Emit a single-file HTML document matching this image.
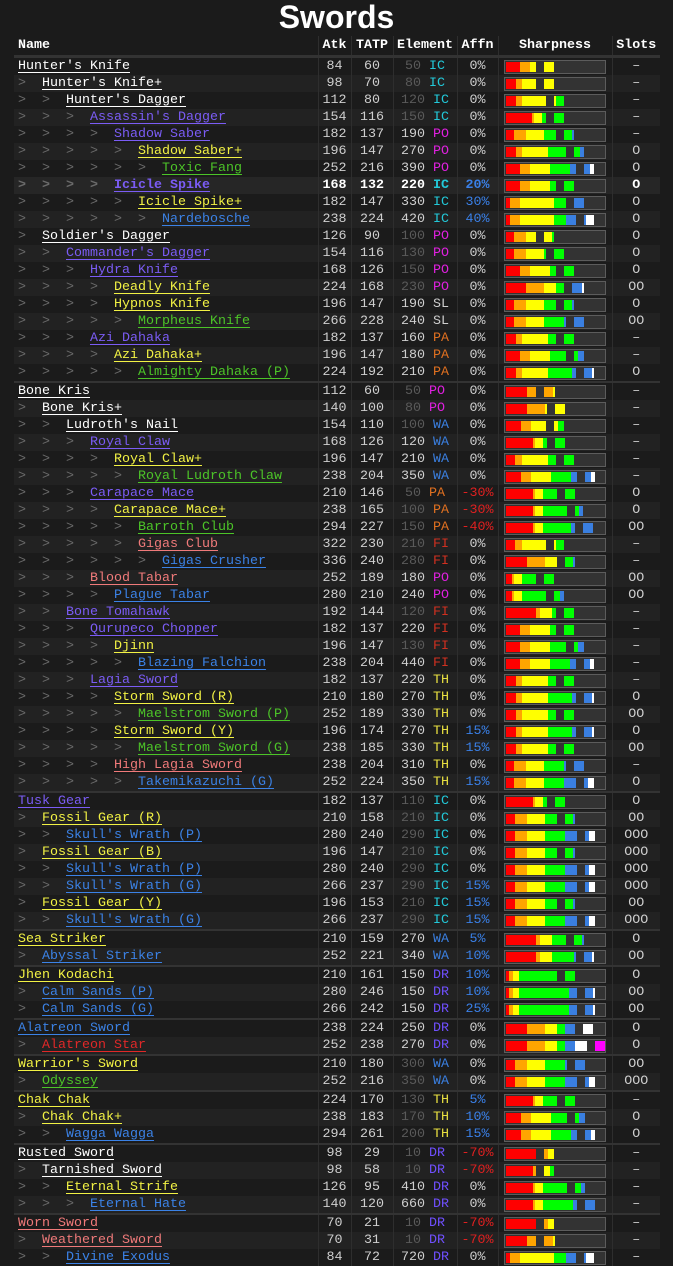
<!DOCTYPE html>
<html><head><meta charset="utf-8">
<style>
html,body{margin:0;padding:0;background:#1b1b1b;width:673px;height:1266px;overflow:hidden}
h1{position:absolute;top:0;left:0;width:673px;margin:0;text-align:center;font:bold 32px/35px "Liberation Sans",sans-serif;color:#fff}
table{position:absolute;left:14px;top:36px;width:646px;border-collapse:collapse;table-layout:fixed;font:13.33px/17px "Liberation Mono",monospace;color:#cfcfcf}
th{height:19px;padding:0;color:#fff;font-weight:bold;text-align:center;border-bottom:3px solid #333;border-left:1px solid #2e2e2e}
th:first-child{text-align:left;padding-left:4px;border-left:none}
td{height:17px;padding:0;text-align:center;border-left:1px solid #2e2e2e;white-space:pre;overflow:hidden}
td:first-child{text-align:left;padding-left:4px;border-left:none}
tbody tr:nth-child(even){background:#222}
tbody+tbody tr:first-child td{border-top:2px solid #333}
tr.hl{background:#262626!important;font-weight:bold;color:#fff}
.a{color:#6a6a6a}
u{text-underline-offset:3px}
.W{color:#fff}.P{color:#7b5cf5}.Y{color:#f2f244}.G{color:#4cc428}.B{color:#3b82e6}.S{color:#f07a7a}.R{color:#e02828}
.gr{color:#5a5a5a}
.IC{color:#22c8d8}.PO{color:#e020e0}.SL{color:#cfcfcf}.PA{color:#e07020}.WA{color:#3a7fe0}.FI{color:#d03020}.TH{color:#e8e040}.DR{color:#7050ff}
.pos{color:#3a80e8}.neg{color:#e02020}
.sb{display:flex;width:98px;height:10px;padding:1px;border:1px solid #5c5c5c;background:#333;margin-left:5px;margin-top:1px}
.sb i{display:block;flex:none;height:10px}
i.r{background:#f00}i.o{background:#ffa500}i.y{background:#ff0}i.g{background:#0f0}i.b{background:#3a7fe0}i.w{background:#fff}i.p{background:#f0f}i.k{background:transparent}
</style></head><body>
<h1>Swords</h1>
<table>
<colgroup><col style="width:304px"><col style="width:33px"><col style="width:42px"><col style="width:64px"><col style="width:41px"><col style="width:114px"><col style="width:48px"></colgroup>
<thead><tr><th>Name</th><th>Atk</th><th>TATP</th><th>Element</th><th>Affn</th><th>Sharpness</th><th>Slots</th></tr></thead>
<tbody>
<tr><td><u class="W">Hunter's Knife</u></td><td>84</td><td>60</td><td><span class="gr">50</span> <span class="IC">IC</span></td><td>0%</td><td><div class="sb"><i class="r" style="width:14px"></i><i class="o" style="width:10px"></i><i class="y" style="width:6px"></i><i class="k" style="width:8px"></i><i class="y" style="width:10px"></i></div></td><td>–</td></tr>
<tr><td><span class="a">&gt;  </span><u class="W">Hunter's Knife+</u></td><td>98</td><td>70</td><td><span class="gr">80</span> <span class="IC">IC</span></td><td>0%</td><td><div class="sb"><i class="r" style="width:10px"></i><i class="o" style="width:6px"></i><i class="y" style="width:14px"></i><i class="k" style="width:8px"></i><i class="y" style="width:10px"></i></div></td><td>–</td></tr>
<tr><td><span class="a">&gt;  &gt;  </span><u class="W">Hunter's Dagger</u></td><td>112</td><td>80</td><td><span class="gr">120</span> <span class="IC">IC</span></td><td>0%</td><td><div class="sb"><i class="r" style="width:10px"></i><i class="o" style="width:6px"></i><i class="y" style="width:24px"></i><i class="k" style="width:8px"></i><i class="y" style="width:2px"></i><i class="g" style="width:8px"></i></div></td><td>–</td></tr>
<tr><td><span class="a">&gt;  &gt;  &gt;  </span><u class="P">Assassin's Dagger</u></td><td>154</td><td>116</td><td><span class="gr">150</span> <span class="IC">IC</span></td><td>0%</td><td><div class="sb"><i class="r" style="width:26px"></i><i class="o" style="width:2px"></i><i class="y" style="width:8px"></i><i class="g" style="width:4px"></i><i class="k" style="width:8px"></i><i class="g" style="width:10px"></i></div></td><td>–</td></tr>
<tr><td><span class="a">&gt;  &gt;  &gt;  &gt;  </span><u class="P">Shadow Saber</u></td><td>182</td><td>137</td><td>190 <span class="PO">PO</span></td><td>0%</td><td><div class="sb"><i class="r" style="width:8px"></i><i class="o" style="width:12px"></i><i class="y" style="width:18px"></i><i class="g" style="width:12px"></i><i class="k" style="width:8px"></i><i class="g" style="width:8px"></i><i class="b" style="width:2px"></i></div></td><td>–</td></tr>
<tr><td><span class="a">&gt;  &gt;  &gt;  &gt;  &gt;  </span><u class="Y">Shadow Saber+</u></td><td>196</td><td>147</td><td>270 <span class="PO">PO</span></td><td>0%</td><td><div class="sb"><i class="r" style="width:10px"></i><i class="o" style="width:6px"></i><i class="y" style="width:26px"></i><i class="g" style="width:18px"></i><i class="k" style="width:8px"></i><i class="g" style="width:6px"></i><i class="b" style="width:4px"></i></div></td><td>O</td></tr>
<tr><td><span class="a">&gt;  &gt;  &gt;  &gt;  &gt;  &gt;  </span><u class="G">Toxic Fang</u></td><td>252</td><td>216</td><td>390 <span class="PO">PO</span></td><td>0%</td><td><div class="sb"><i class="r" style="width:14px"></i><i class="o" style="width:10px"></i><i class="y" style="width:20px"></i><i class="g" style="width:20px"></i><i class="b" style="width:6px"></i><i class="k" style="width:8px"></i><i class="b" style="width:6px"></i><i class="w" style="width:4px"></i></div></td><td>O</td></tr>
<tr class="hl"><td><span class="a">&gt;  &gt;  &gt;  &gt;  </span><u class="P">Icicle Spike</u></td><td>168</td><td>132</td><td>220 <span class="IC">IC</span></td><td><span class="pos">20%</span></td><td><div class="sb"><i class="r" style="width:14px"></i><i class="o" style="width:10px"></i><i class="y" style="width:20px"></i><i class="g" style="width:6px"></i><i class="k" style="width:8px"></i><i class="g" style="width:10px"></i></div></td><td>O</td></tr>
<tr><td><span class="a">&gt;  &gt;  &gt;  &gt;  &gt;  </span><u class="Y">Icicle Spike+</u></td><td>182</td><td>147</td><td>330 <span class="IC">IC</span></td><td><span class="pos">30%</span></td><td><div class="sb"><i class="r" style="width:4px"></i><i class="o" style="width:10px"></i><i class="y" style="width:34px"></i><i class="g" style="width:12px"></i><i class="k" style="width:8px"></i><i class="b" style="width:10px"></i></div></td><td>O</td></tr>
<tr><td><span class="a">&gt;  &gt;  &gt;  &gt;  &gt;  &gt;  </span><u class="B">Nardebosche</u></td><td>238</td><td>224</td><td>420 <span class="IC">IC</span></td><td><span class="pos">40%</span></td><td><div class="sb"><i class="r" style="width:4px"></i><i class="o" style="width:10px"></i><i class="y" style="width:34px"></i><i class="g" style="width:12px"></i><i class="b" style="width:10px"></i><i class="k" style="width:8px"></i><i class="b" style="width:2px"></i><i class="w" style="width:8px"></i></div></td><td>O</td></tr>
<tr><td><span class="a">&gt;  </span><u class="W">Soldier's Dagger</u></td><td>126</td><td>90</td><td><span class="gr">100</span> <span class="PO">PO</span></td><td>0%</td><td><div class="sb"><i class="r" style="width:8px"></i><i class="o" style="width:12px"></i><i class="y" style="width:10px"></i><i class="k" style="width:8px"></i><i class="y" style="width:8px"></i><i class="g" style="width:2px"></i></div></td><td>O</td></tr>
<tr><td><span class="a">&gt;  &gt;  </span><u class="P">Commander's Dagger</u></td><td>154</td><td>116</td><td><span class="gr">130</span> <span class="PO">PO</span></td><td>0%</td><td><div class="sb"><i class="r" style="width:8px"></i><i class="o" style="width:12px"></i><i class="y" style="width:18px"></i><i class="g" style="width:2px"></i><i class="k" style="width:8px"></i><i class="g" style="width:10px"></i></div></td><td>O</td></tr>
<tr><td><span class="a">&gt;  &gt;  &gt;  </span><u class="P">Hydra Knife</u></td><td>168</td><td>126</td><td><span class="gr">150</span> <span class="PO">PO</span></td><td>0%</td><td><div class="sb"><i class="r" style="width:14px"></i><i class="o" style="width:10px"></i><i class="y" style="width:20px"></i><i class="g" style="width:6px"></i><i class="k" style="width:8px"></i><i class="g" style="width:10px"></i></div></td><td>O</td></tr>
<tr><td><span class="a">&gt;  &gt;  &gt;  &gt;  </span><u class="Y">Deadly Knife</u></td><td>224</td><td>168</td><td><span class="gr">230</span> <span class="PO">PO</span></td><td>0%</td><td><div class="sb"><i class="r" style="width:20px"></i><i class="o" style="width:18px"></i><i class="y" style="width:12px"></i><i class="g" style="width:8px"></i><i class="k" style="width:8px"></i><i class="b" style="width:10px"></i><i class="w" style="width:2px"></i></div></td><td>OO</td></tr>
<tr><td><span class="a">&gt;  &gt;  &gt;  &gt;  </span><u class="Y">Hypnos Knife</u></td><td>196</td><td>147</td><td>190 <span class="SL">SL</span></td><td>0%</td><td><div class="sb"><i class="r" style="width:8px"></i><i class="o" style="width:12px"></i><i class="y" style="width:18px"></i><i class="g" style="width:12px"></i><i class="k" style="width:8px"></i><i class="g" style="width:8px"></i><i class="b" style="width:2px"></i></div></td><td>O</td></tr>
<tr><td><span class="a">&gt;  &gt;  &gt;  &gt;  &gt;  </span><u class="G">Morpheus Knife</u></td><td>266</td><td>228</td><td>240 <span class="SL">SL</span></td><td>0%</td><td><div class="sb"><i class="r" style="width:8px"></i><i class="o" style="width:12px"></i><i class="y" style="width:18px"></i><i class="g" style="width:20px"></i><i class="b" style="width:2px"></i><i class="k" style="width:8px"></i><i class="b" style="width:10px"></i></div></td><td>OO</td></tr>
<tr><td><span class="a">&gt;  &gt;  &gt;  </span><u class="P">Azi Dahaka</u></td><td>182</td><td>137</td><td>160 <span class="PA">PA</span></td><td>0%</td><td><div class="sb"><i class="r" style="width:10px"></i><i class="o" style="width:6px"></i><i class="y" style="width:26px"></i><i class="g" style="width:8px"></i><i class="k" style="width:8px"></i><i class="g" style="width:10px"></i></div></td><td>–</td></tr>
<tr><td><span class="a">&gt;  &gt;  &gt;  &gt;  </span><u class="Y">Azi Dahaka+</u></td><td>196</td><td>147</td><td>180 <span class="PA">PA</span></td><td>0%</td><td><div class="sb"><i class="r" style="width:14px"></i><i class="o" style="width:10px"></i><i class="y" style="width:20px"></i><i class="g" style="width:16px"></i><i class="k" style="width:8px"></i><i class="g" style="width:4px"></i><i class="b" style="width:6px"></i></div></td><td>–</td></tr>
<tr><td><span class="a">&gt;  &gt;  &gt;  &gt;  &gt;  </span><u class="G">Almighty Dahaka (P)</u></td><td>224</td><td>192</td><td>210 <span class="PA">PA</span></td><td>0%</td><td><div class="sb"><i class="r" style="width:10px"></i><i class="o" style="width:6px"></i><i class="y" style="width:26px"></i><i class="g" style="width:24px"></i><i class="b" style="width:4px"></i><i class="k" style="width:8px"></i><i class="b" style="width:8px"></i><i class="w" style="width:2px"></i></div></td><td>O</td></tr>
</tbody>
<tbody>
<tr><td><u class="W">Bone Kris</u></td><td>112</td><td>60</td><td><span class="gr">50</span> <span class="PO">PO</span></td><td>0%</td><td><div class="sb"><i class="r" style="width:21px"></i><i class="o" style="width:9px"></i><i class="k" style="width:8px"></i><i class="o" style="width:9px"></i><i class="y" style="width:2px"></i></div></td><td>–</td></tr>
<tr><td><span class="a">&gt;  </span><u class="W">Bone Kris+</u></td><td>140</td><td>100</td><td><span class="gr">80</span> <span class="PO">PO</span></td><td>0%</td><td><div class="sb"><i class="r" style="width:21px"></i><i class="o" style="width:18px"></i><i class="y" style="width:2px"></i><i class="k" style="width:8px"></i><i class="y" style="width:10px"></i></div></td><td>–</td></tr>
<tr><td><span class="a">&gt;  &gt;  </span><u class="W">Ludroth's Nail</u></td><td>154</td><td>110</td><td><span class="gr">100</span> <span class="WA">WA</span></td><td>0%</td><td><div class="sb"><i class="r" style="width:15px"></i><i class="o" style="width:10px"></i><i class="y" style="width:15px"></i><i class="k" style="width:8px"></i><i class="y" style="width:4px"></i><i class="g" style="width:6px"></i></div></td><td>–</td></tr>
<tr><td><span class="a">&gt;  &gt;  &gt;  </span><u class="P">Royal Claw</u></td><td>168</td><td>126</td><td>120 <span class="WA">WA</span></td><td>0%</td><td><div class="sb"><i class="r" style="width:27px"></i><i class="o" style="width:2px"></i><i class="y" style="width:8px"></i><i class="g" style="width:4px"></i><i class="k" style="width:8px"></i><i class="g" style="width:10px"></i></div></td><td>–</td></tr>
<tr><td><span class="a">&gt;  &gt;  &gt;  &gt;  </span><u class="Y">Royal Claw+</u></td><td>196</td><td>147</td><td>210 <span class="WA">WA</span></td><td>0%</td><td><div class="sb"><i class="r" style="width:9px"></i><i class="o" style="width:7px"></i><i class="y" style="width:26px"></i><i class="g" style="width:8px"></i><i class="k" style="width:8px"></i><i class="g" style="width:10px"></i></div></td><td>–</td></tr>
<tr><td><span class="a">&gt;  &gt;  &gt;  &gt;  &gt;  </span><u class="G">Royal Ludroth Claw</u></td><td>238</td><td>204</td><td>350 <span class="WA">WA</span></td><td>0%</td><td><div class="sb"><i class="r" style="width:15px"></i><i class="o" style="width:10px"></i><i class="y" style="width:20px"></i><i class="g" style="width:20px"></i><i class="b" style="width:6px"></i><i class="k" style="width:8px"></i><i class="b" style="width:6px"></i><i class="w" style="width:4px"></i></div></td><td>–</td></tr>
<tr><td><span class="a">&gt;  &gt;  &gt;  </span><u class="P">Carapace Mace</u></td><td>210</td><td>146</td><td><span class="gr">50</span> <span class="PA">PA</span></td><td><span class="neg">-30%</span></td><td><div class="sb"><i class="r" style="width:27px"></i><i class="o" style="width:2px"></i><i class="y" style="width:8px"></i><i class="g" style="width:14px"></i><i class="k" style="width:8px"></i><i class="g" style="width:10px"></i></div></td><td>O</td></tr>
<tr><td><span class="a">&gt;  &gt;  &gt;  &gt;  </span><u class="Y">Carapace Mace+</u></td><td>238</td><td>165</td><td><span class="gr">100</span> <span class="PA">PA</span></td><td><span class="neg">-30%</span></td><td><div class="sb"><i class="r" style="width:27px"></i><i class="o" style="width:2px"></i><i class="y" style="width:8px"></i><i class="g" style="width:24px"></i><i class="k" style="width:8px"></i><i class="g" style="width:4px"></i><i class="b" style="width:4px"></i></div></td><td>O</td></tr>
<tr><td><span class="a">&gt;  &gt;  &gt;  &gt;  &gt;  </span><u class="G">Barroth Club</u></td><td>294</td><td>227</td><td><span class="gr">150</span> <span class="PA">PA</span></td><td><span class="neg">-40%</span></td><td><div class="sb"><i class="r" style="width:27px"></i><i class="o" style="width:2px"></i><i class="y" style="width:8px"></i><i class="g" style="width:28px"></i><i class="b" style="width:4px"></i><i class="k" style="width:8px"></i><i class="b" style="width:10px"></i></div></td><td>OO</td></tr>
<tr><td><span class="a">&gt;  &gt;  &gt;  &gt;  &gt;  </span><u class="S">Gigas Club</u></td><td>322</td><td>230</td><td><span class="gr">210</span> <span class="FI">FI</span></td><td>0%</td><td><div class="sb"><i class="r" style="width:9px"></i><i class="o" style="width:7px"></i><i class="y" style="width:24px"></i><i class="k" style="width:8px"></i><i class="y" style="width:2px"></i><i class="g" style="width:8px"></i></div></td><td>–</td></tr>
<tr><td><span class="a">&gt;  &gt;  &gt;  &gt;  &gt;  &gt;  </span><u class="B">Gigas Crusher</u></td><td>336</td><td>240</td><td><span class="gr">280</span> <span class="FI">FI</span></td><td>0%</td><td><div class="sb"><i class="r" style="width:21px"></i><i class="o" style="width:18px"></i><i class="y" style="width:12px"></i><i class="k" style="width:8px"></i><i class="g" style="width:8px"></i><i class="b" style="width:2px"></i></div></td><td>–</td></tr>
<tr><td><span class="a">&gt;  &gt;  &gt;  </span><u class="S">Blood Tabar</u></td><td>252</td><td>189</td><td>180 <span class="PO">PO</span></td><td>0%</td><td><div class="sb"><i class="r" style="width:6px"></i><i class="o" style="width:2px"></i><i class="y" style="width:8px"></i><i class="g" style="width:14px"></i><i class="k" style="width:8px"></i><i class="g" style="width:10px"></i></div></td><td>OO</td></tr>
<tr><td><span class="a">&gt;  &gt;  &gt;  &gt;  </span><u class="B">Plague Tabar</u></td><td>280</td><td>210</td><td>240 <span class="PO">PO</span></td><td>0%</td><td><div class="sb"><i class="r" style="width:6px"></i><i class="o" style="width:2px"></i><i class="y" style="width:8px"></i><i class="g" style="width:24px"></i><i class="k" style="width:8px"></i><i class="g" style="width:6px"></i><i class="b" style="width:4px"></i></div></td><td>OO</td></tr>
<tr><td><span class="a">&gt;  &gt;  </span><u class="P">Bone Tomahawk</u></td><td>192</td><td>144</td><td><span class="gr">120</span> <span class="FI">FI</span></td><td>0%</td><td><div class="sb"><i class="r" style="width:30px"></i><i class="o" style="width:4px"></i><i class="y" style="width:12px"></i><i class="g" style="width:4px"></i><i class="k" style="width:8px"></i><i class="g" style="width:10px"></i></div></td><td>–</td></tr>
<tr><td><span class="a">&gt;  &gt;  &gt;  </span><u class="P">Qurupeco Chopper</u></td><td>182</td><td>137</td><td>220 <span class="FI">FI</span></td><td>0%</td><td><div class="sb"><i class="r" style="width:14px"></i><i class="o" style="width:10px"></i><i class="y" style="width:20px"></i><i class="g" style="width:6px"></i><i class="k" style="width:8px"></i><i class="g" style="width:10px"></i></div></td><td>–</td></tr>
<tr><td><span class="a">&gt;  &gt;  &gt;  &gt;  </span><u class="Y">Djinn</u></td><td>196</td><td>147</td><td><span class="gr">130</span> <span class="FI">FI</span></td><td>0%</td><td><div class="sb"><i class="r" style="width:14px"></i><i class="o" style="width:10px"></i><i class="y" style="width:20px"></i><i class="g" style="width:16px"></i><i class="k" style="width:8px"></i><i class="g" style="width:4px"></i><i class="b" style="width:6px"></i></div></td><td>–</td></tr>
<tr><td><span class="a">&gt;  &gt;  &gt;  &gt;  &gt;  </span><u class="B">Blazing Falchion</u></td><td>238</td><td>204</td><td>440 <span class="FI">FI</span></td><td>0%</td><td><div class="sb"><i class="r" style="width:14px"></i><i class="o" style="width:10px"></i><i class="y" style="width:20px"></i><i class="g" style="width:20px"></i><i class="b" style="width:6px"></i><i class="k" style="width:8px"></i><i class="b" style="width:6px"></i><i class="w" style="width:4px"></i></div></td><td>–</td></tr>
<tr><td><span class="a">&gt;  &gt;  &gt;  </span><u class="P">Lagia Sword</u></td><td>182</td><td>137</td><td>220 <span class="TH">TH</span></td><td>0%</td><td><div class="sb"><i class="r" style="width:10px"></i><i class="o" style="width:6px"></i><i class="y" style="width:26px"></i><i class="g" style="width:8px"></i><i class="k" style="width:8px"></i><i class="g" style="width:10px"></i></div></td><td>–</td></tr>
<tr><td><span class="a">&gt;  &gt;  &gt;  &gt;  </span><u class="Y">Storm Sword (R)</u></td><td>210</td><td>180</td><td>270 <span class="TH">TH</span></td><td>0%</td><td><div class="sb"><i class="r" style="width:10px"></i><i class="o" style="width:6px"></i><i class="y" style="width:26px"></i><i class="g" style="width:24px"></i><i class="b" style="width:4px"></i><i class="k" style="width:8px"></i><i class="b" style="width:8px"></i><i class="w" style="width:2px"></i></div></td><td>O</td></tr>
<tr><td><span class="a">&gt;  &gt;  &gt;  &gt;  &gt;  </span><u class="G">Maelstrom Sword (P)</u></td><td>252</td><td>189</td><td>330 <span class="TH">TH</span></td><td>0%</td><td><div class="sb"><i class="r" style="width:10px"></i><i class="o" style="width:6px"></i><i class="y" style="width:26px"></i><i class="g" style="width:8px"></i><i class="k" style="width:8px"></i><i class="g" style="width:10px"></i></div></td><td>OO</td></tr>
<tr><td><span class="a">&gt;  &gt;  &gt;  &gt;  </span><u class="Y">Storm Sword (Y)</u></td><td>196</td><td>174</td><td>270 <span class="TH">TH</span></td><td><span class="pos">15%</span></td><td><div class="sb"><i class="r" style="width:10px"></i><i class="o" style="width:6px"></i><i class="y" style="width:26px"></i><i class="g" style="width:24px"></i><i class="b" style="width:4px"></i><i class="k" style="width:8px"></i><i class="b" style="width:8px"></i><i class="w" style="width:2px"></i></div></td><td>O</td></tr>
<tr><td><span class="a">&gt;  &gt;  &gt;  &gt;  &gt;  </span><u class="G">Maelstrom Sword (G)</u></td><td>238</td><td>185</td><td>330 <span class="TH">TH</span></td><td><span class="pos">15%</span></td><td><div class="sb"><i class="r" style="width:10px"></i><i class="o" style="width:6px"></i><i class="y" style="width:26px"></i><i class="g" style="width:8px"></i><i class="k" style="width:8px"></i><i class="g" style="width:10px"></i></div></td><td>OO</td></tr>
<tr><td><span class="a">&gt;  &gt;  &gt;  &gt;  </span><u class="S">High Lagia Sword</u></td><td>238</td><td>204</td><td>310 <span class="TH">TH</span></td><td>0%</td><td><div class="sb"><i class="r" style="width:8px"></i><i class="o" style="width:12px"></i><i class="y" style="width:18px"></i><i class="g" style="width:20px"></i><i class="b" style="width:2px"></i><i class="k" style="width:8px"></i><i class="b" style="width:10px"></i></div></td><td>–</td></tr>
<tr><td><span class="a">&gt;  &gt;  &gt;  &gt;  &gt;  </span><u class="B">Takemikazuchi (G)</u></td><td>252</td><td>224</td><td>350 <span class="TH">TH</span></td><td><span class="pos">15%</span></td><td><div class="sb"><i class="r" style="width:8px"></i><i class="o" style="width:12px"></i><i class="y" style="width:18px"></i><i class="g" style="width:20px"></i><i class="b" style="width:12px"></i><i class="k" style="width:8px"></i><i class="b" style="width:4px"></i><i class="w" style="width:6px"></i></div></td><td>O</td></tr>
</tbody>
<tbody>
<tr><td><u class="P">Tusk Gear</u></td><td>182</td><td>137</td><td><span class="gr">110</span> <span class="IC">IC</span></td><td>0%</td><td><div class="sb"><i class="r" style="width:27px"></i><i class="o" style="width:2px"></i><i class="y" style="width:8px"></i><i class="g" style="width:4px"></i><i class="k" style="width:8px"></i><i class="g" style="width:10px"></i></div></td><td>O</td></tr>
<tr><td><span class="a">&gt;  </span><u class="Y">Fossil Gear (R)</u></td><td>210</td><td>158</td><td><span class="gr">210</span> <span class="IC">IC</span></td><td>0%</td><td><div class="sb"><i class="r" style="width:9px"></i><i class="o" style="width:12px"></i><i class="y" style="width:18px"></i><i class="g" style="width:12px"></i><i class="k" style="width:8px"></i><i class="g" style="width:8px"></i><i class="b" style="width:2px"></i></div></td><td>OO</td></tr>
<tr><td><span class="a">&gt;  &gt;  </span><u class="B">Skull's Wrath (P)</u></td><td>280</td><td>240</td><td><span class="gr">290</span> <span class="IC">IC</span></td><td>0%</td><td><div class="sb"><i class="r" style="width:9px"></i><i class="o" style="width:12px"></i><i class="y" style="width:18px"></i><i class="g" style="width:20px"></i><i class="b" style="width:12px"></i><i class="k" style="width:8px"></i><i class="b" style="width:4px"></i><i class="w" style="width:6px"></i></div></td><td>OOO</td></tr>
<tr><td><span class="a">&gt;  </span><u class="Y">Fossil Gear (B)</u></td><td>196</td><td>147</td><td><span class="gr">210</span> <span class="IC">IC</span></td><td>0%</td><td><div class="sb"><i class="r" style="width:9px"></i><i class="o" style="width:12px"></i><i class="y" style="width:18px"></i><i class="g" style="width:12px"></i><i class="k" style="width:8px"></i><i class="g" style="width:8px"></i><i class="b" style="width:2px"></i></div></td><td>OOO</td></tr>
<tr><td><span class="a">&gt;  &gt;  </span><u class="B">Skull's Wrath (P)</u></td><td>280</td><td>240</td><td><span class="gr">290</span> <span class="IC">IC</span></td><td>0%</td><td><div class="sb"><i class="r" style="width:9px"></i><i class="o" style="width:12px"></i><i class="y" style="width:18px"></i><i class="g" style="width:20px"></i><i class="b" style="width:12px"></i><i class="k" style="width:8px"></i><i class="b" style="width:4px"></i><i class="w" style="width:6px"></i></div></td><td>OOO</td></tr>
<tr><td><span class="a">&gt;  &gt;  </span><u class="B">Skull's Wrath (G)</u></td><td>266</td><td>237</td><td><span class="gr">290</span> <span class="IC">IC</span></td><td><span class="pos">15%</span></td><td><div class="sb"><i class="r" style="width:9px"></i><i class="o" style="width:12px"></i><i class="y" style="width:18px"></i><i class="g" style="width:20px"></i><i class="b" style="width:12px"></i><i class="k" style="width:8px"></i><i class="b" style="width:4px"></i><i class="w" style="width:6px"></i></div></td><td>OOO</td></tr>
<tr><td><span class="a">&gt;  </span><u class="Y">Fossil Gear (Y)</u></td><td>196</td><td>153</td><td><span class="gr">210</span> <span class="IC">IC</span></td><td><span class="pos">15%</span></td><td><div class="sb"><i class="r" style="width:9px"></i><i class="o" style="width:12px"></i><i class="y" style="width:18px"></i><i class="g" style="width:12px"></i><i class="k" style="width:8px"></i><i class="g" style="width:8px"></i><i class="b" style="width:2px"></i></div></td><td>OO</td></tr>
<tr><td><span class="a">&gt;  &gt;  </span><u class="B">Skull's Wrath (G)</u></td><td>266</td><td>237</td><td><span class="gr">290</span> <span class="IC">IC</span></td><td><span class="pos">15%</span></td><td><div class="sb"><i class="r" style="width:9px"></i><i class="o" style="width:12px"></i><i class="y" style="width:18px"></i><i class="g" style="width:20px"></i><i class="b" style="width:12px"></i><i class="k" style="width:8px"></i><i class="b" style="width:4px"></i><i class="w" style="width:6px"></i></div></td><td>OOO</td></tr>
</tbody>
<tbody>
<tr><td><u class="Y">Sea Striker</u></td><td>210</td><td>159</td><td>270 <span class="WA">WA</span></td><td><span class="pos">5%</span></td><td><div class="sb"><i class="r" style="width:30px"></i><i class="o" style="width:4px"></i><i class="y" style="width:12px"></i><i class="g" style="width:14px"></i><i class="k" style="width:8px"></i><i class="g" style="width:8px"></i><i class="b" style="width:2px"></i></div></td><td>O</td></tr>
<tr><td><span class="a">&gt;  </span><u class="B">Abyssal Striker</u></td><td>252</td><td>221</td><td>340 <span class="WA">WA</span></td><td><span class="pos">10%</span></td><td><div class="sb"><i class="r" style="width:30px"></i><i class="o" style="width:4px"></i><i class="y" style="width:12px"></i><i class="g" style="width:22px"></i><i class="b" style="width:2px"></i><i class="k" style="width:8px"></i><i class="b" style="width:8px"></i><i class="w" style="width:2px"></i></div></td><td>OO</td></tr>
</tbody>
<tbody>
<tr><td><u class="Y">Jhen Kodachi</u></td><td>210</td><td>161</td><td>150 <span class="DR">DR</span></td><td><span class="pos">10%</span></td><td><div class="sb"><i class="r" style="width:3px"></i><i class="o" style="width:4px"></i><i class="y" style="width:6px"></i><i class="g" style="width:38px"></i><i class="k" style="width:8px"></i><i class="g" style="width:10px"></i></div></td><td>O</td></tr>
<tr><td><span class="a">&gt;  </span><u class="B">Calm Sands (P)</u></td><td>280</td><td>246</td><td>150 <span class="DR">DR</span></td><td><span class="pos">10%</span></td><td><div class="sb"><i class="r" style="width:3px"></i><i class="o" style="width:4px"></i><i class="y" style="width:6px"></i><i class="g" style="width:50px"></i><i class="b" style="width:8px"></i><i class="k" style="width:8px"></i><i class="b" style="width:8px"></i><i class="w" style="width:2px"></i></div></td><td>OO</td></tr>
<tr><td><span class="a">&gt;  </span><u class="B">Calm Sands (G)</u></td><td>266</td><td>242</td><td>150 <span class="DR">DR</span></td><td><span class="pos">25%</span></td><td><div class="sb"><i class="r" style="width:3px"></i><i class="o" style="width:4px"></i><i class="y" style="width:6px"></i><i class="g" style="width:50px"></i><i class="b" style="width:8px"></i><i class="k" style="width:8px"></i><i class="b" style="width:8px"></i><i class="w" style="width:2px"></i></div></td><td>OO</td></tr>
</tbody>
<tbody>
<tr><td><u class="B">Alatreon Sword</u></td><td>238</td><td>224</td><td>250 <span class="DR">DR</span></td><td>0%</td><td><div class="sb"><i class="r" style="width:21px"></i><i class="o" style="width:18px"></i><i class="y" style="width:12px"></i><i class="g" style="width:8px"></i><i class="b" style="width:10px"></i><i class="k" style="width:8px"></i><i class="w" style="width:10px"></i></div></td><td>O</td></tr>
<tr><td><span class="a">&gt;  </span><u class="R">Alatreon Star</u></td><td>252</td><td>238</td><td>270 <span class="DR">DR</span></td><td>0%</td><td><div class="sb"><i class="r" style="width:21px"></i><i class="o" style="width:18px"></i><i class="y" style="width:12px"></i><i class="g" style="width:8px"></i><i class="b" style="width:10px"></i><i class="w" style="width:12px"></i><i class="k" style="width:8px"></i><i class="p" style="width:10px"></i></div></td><td>O</td></tr>
</tbody>
<tbody>
<tr><td><u class="Y">Warrior's Sword</u></td><td>210</td><td>180</td><td><span class="gr">300</span> <span class="WA">WA</span></td><td>0%</td><td><div class="sb"><i class="r" style="width:9px"></i><i class="o" style="width:12px"></i><i class="y" style="width:18px"></i><i class="g" style="width:20px"></i><i class="b" style="width:2px"></i><i class="k" style="width:8px"></i><i class="b" style="width:10px"></i></div></td><td>OO</td></tr>
<tr><td><span class="a">&gt;  </span><u class="G">Odyssey</u></td><td>252</td><td>216</td><td><span class="gr">350</span> <span class="WA">WA</span></td><td>0%</td><td><div class="sb"><i class="r" style="width:9px"></i><i class="o" style="width:12px"></i><i class="y" style="width:18px"></i><i class="g" style="width:20px"></i><i class="b" style="width:12px"></i><i class="k" style="width:8px"></i><i class="b" style="width:4px"></i><i class="w" style="width:6px"></i></div></td><td>OOO</td></tr>
</tbody>
<tbody>
<tr><td><u class="Y">Chak Chak</u></td><td>224</td><td>170</td><td><span class="gr">130</span> <span class="TH">TH</span></td><td><span class="pos">5%</span></td><td><div class="sb"><i class="r" style="width:27px"></i><i class="o" style="width:2px"></i><i class="y" style="width:8px"></i><i class="g" style="width:14px"></i><i class="k" style="width:8px"></i><i class="g" style="width:10px"></i></div></td><td>–</td></tr>
<tr><td><span class="a">&gt;  </span><u class="Y">Chak Chak+</u></td><td>238</td><td>183</td><td><span class="gr">170</span> <span class="TH">TH</span></td><td><span class="pos">10%</span></td><td><div class="sb"><i class="r" style="width:15px"></i><i class="o" style="width:10px"></i><i class="y" style="width:20px"></i><i class="g" style="width:16px"></i><i class="k" style="width:8px"></i><i class="g" style="width:4px"></i><i class="b" style="width:6px"></i></div></td><td>O</td></tr>
<tr><td><span class="a">&gt;  &gt;  </span><u class="B">Wagga Wagga</u></td><td>294</td><td>261</td><td><span class="gr">200</span> <span class="TH">TH</span></td><td><span class="pos">15%</span></td><td><div class="sb"><i class="r" style="width:15px"></i><i class="o" style="width:10px"></i><i class="y" style="width:20px"></i><i class="g" style="width:20px"></i><i class="b" style="width:6px"></i><i class="k" style="width:8px"></i><i class="b" style="width:6px"></i><i class="w" style="width:4px"></i></div></td><td>O</td></tr>
</tbody>
<tbody>
<tr><td><u class="W">Rusted Sword</u></td><td>98</td><td>29</td><td><span class="gr">10</span> <span class="DR">DR</span></td><td><span class="neg">-70%</span></td><td><div class="sb"><i class="r" style="width:30px"></i><i class="k" style="width:8px"></i><i class="o" style="width:4px"></i><i class="y" style="width:6px"></i></div></td><td>–</td></tr>
<tr><td><span class="a">&gt;  </span><u class="W">Tarnished Sword</u></td><td>98</td><td>58</td><td><span class="gr">10</span> <span class="DR">DR</span></td><td><span class="neg">-70%</span></td><td><div class="sb"><i class="r" style="width:27px"></i><i class="o" style="width:3px"></i><i class="k" style="width:8px"></i><i class="y" style="width:6px"></i><i class="g" style="width:4px"></i></div></td><td>–</td></tr>
<tr><td><span class="a">&gt;  &gt;  </span><u class="Y">Eternal Strife</u></td><td>126</td><td>95</td><td>410 <span class="DR">DR</span></td><td>0%</td><td><div class="sb"><i class="r" style="width:27px"></i><i class="o" style="width:2px"></i><i class="y" style="width:8px"></i><i class="g" style="width:24px"></i><i class="k" style="width:8px"></i><i class="g" style="width:6px"></i><i class="b" style="width:4px"></i></div></td><td>–</td></tr>
<tr><td><span class="a">&gt;  &gt;  &gt;  </span><u class="B">Eternal Hate</u></td><td>140</td><td>120</td><td>660 <span class="DR">DR</span></td><td>0%</td><td><div class="sb"><i class="r" style="width:27px"></i><i class="o" style="width:2px"></i><i class="y" style="width:8px"></i><i class="g" style="width:30px"></i><i class="b" style="width:4px"></i><i class="k" style="width:8px"></i><i class="b" style="width:10px"></i></div></td><td>–</td></tr>
</tbody>
<tbody>
<tr><td><u class="S">Worn Sword</u></td><td>70</td><td>21</td><td><span class="gr">10</span> <span class="DR">DR</span></td><td><span class="neg">-70%</span></td><td><div class="sb"><i class="r" style="width:30px"></i><i class="k" style="width:8px"></i><i class="o" style="width:4px"></i><i class="y" style="width:6px"></i></div></td><td>–</td></tr>
<tr><td><span class="a">&gt;  </span><u class="S">Weathered Sword</u></td><td>70</td><td>31</td><td><span class="gr">10</span> <span class="DR">DR</span></td><td><span class="neg">-70%</span></td><td><div class="sb"><i class="r" style="width:21px"></i><i class="o" style="width:9px"></i><i class="k" style="width:8px"></i><i class="o" style="width:9px"></i><i class="y" style="width:2px"></i></div></td><td>–</td></tr>
<tr><td><span class="a">&gt;  &gt;  </span><u class="B">Divine Exodus</u></td><td>84</td><td>72</td><td>720 <span class="DR">DR</span></td><td>0%</td><td><div class="sb"><i class="r" style="width:4px"></i><i class="o" style="width:10px"></i><i class="y" style="width:34px"></i><i class="g" style="width:12px"></i><i class="b" style="width:10px"></i><i class="k" style="width:8px"></i><i class="b" style="width:2px"></i><i class="w" style="width:8px"></i></div></td><td>–</td></tr>
</tbody>
</table>
</body></html>
